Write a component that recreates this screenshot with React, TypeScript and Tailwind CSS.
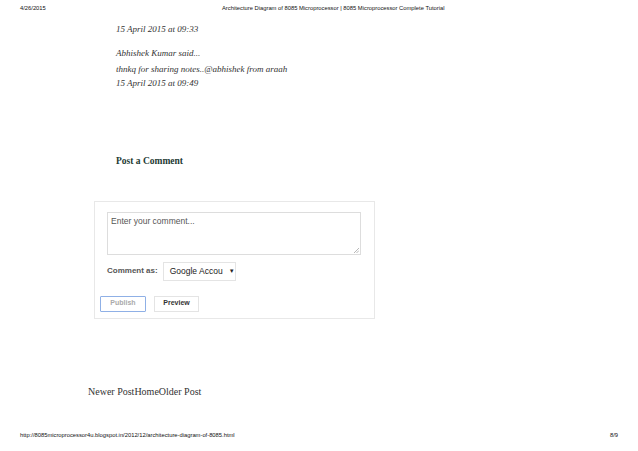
export default function App() {
  return (
    <div className="relative flex h-[451px] w-[638px] flex-col bg-white font-['Liberation_Sans',Arial,sans-serif]">
      {/* print header */}
      <div className="flex h-[12px] items-end px-[20px] text-[5.8px] leading-none text-[#111]">
        <span className="w-[180px]">4/26/2015</span>
        <span className="ml-[22px]">
          Architecture Diagram of 8085 Microprocessor | 8085 Microprocessor Complete Tutorial
        </span>
      </div>

      {/* comments */}
      <div className="ml-[116px] mt-[10px] font-['Liberation_Serif',Georgia,serif] text-[9px] italic leading-[14px] text-[#333]">
        <p>15 April 2015 at 09:33</p>
        <p className="mt-[10px]">Abhishek Kumar said...</p>
        <p className="mt-[2px]">thnkq for sharing notes..@abhishek from araah</p>
        <p>15 April 2015 at 09:49</p>
      </div>

      <h4 className="ml-[116px] mt-[67px] font-['Liberation_Serif',Georgia,serif] text-[9.5px] font-bold leading-none text-[#1d3a33]">
        Post a Comment
      </h4>

      {/* comment form */}
      <div className="ml-[94px] mt-[34px] flex h-[118px] w-[281px] flex-col border border-[#e8e8e8] pl-[5px] pt-[10px]">
        <div className="relative ml-[7px] h-[43px] w-[254px] border border-[#ddd] px-[3px] pt-[4px] text-[8.5px] leading-none text-[#555]">
          Enter your comment...
          <svg className="absolute bottom-[1px] right-[1px]" width="5" height="5" viewBox="0 0 5 5">
            <path d="M0 5L5 0M2.5 5L5 2.5" stroke="#999" strokeWidth="0.7" />
          </svg>
        </div>
        <div className="ml-[7px] mt-[7px] flex items-center gap-[5px]">
          <span className="text-[8px] font-bold text-[#555]">Comment as:</span>
          <div className="flex h-[19px] w-[73px] items-center whitespace-nowrap border border-[#e4e4e4] pl-[6px] text-[8.5px] text-[#222]">
            <span>Google Accou</span>
            <span className="ml-[6px] text-[6px]">▼</span>
          </div>
        </div>
        <div className="mt-[15px] flex gap-[8px]">
          <div className="flex h-[16px] w-[46px] items-center justify-center rounded-[1px] border border-[#8fb0e6] text-[7px] font-bold text-[#aaa]">
            Publish
          </div>
          <div className="flex h-[16px] w-[45px] items-center justify-center border border-[#e4e4e4] text-[7px] font-bold text-[#333]">
            Preview
          </div>
        </div>
      </div>

      <div className="ml-[88px] mt-[68px] font-['Liberation_Serif',Georgia,serif] text-[10px] leading-none text-[#333]">
        Newer PostHomeOlder Post
      </div>

      {/* print footer */}
      <div className="mt-auto mb-[12px] flex items-center justify-between px-[20px] text-[5.8px] leading-none text-[#111]">
        <span>http://8085microprocessor4u.blogspot.in/2012/12/architecture-diagram-of-8085.html</span>
        <span>8/9</span>
      </div>
    </div>
  );
}
